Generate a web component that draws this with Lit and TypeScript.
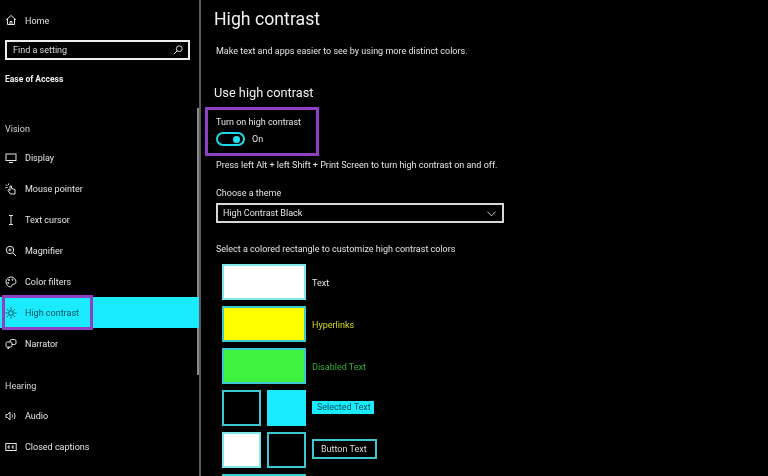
import { LitElement, html, css, svg } from "lit";
import { customElement } from "lit/decorators.js";

const ic = (p: unknown) => html`<svg class="ic" viewBox="0 0 12 12" fill="none" stroke="currentColor" stroke-width="1">${p}</svg>`;
const icons: Record<string, unknown> = {
  home: ic(svg`<path d="M1 6 6 1.500 11 6M2.500 5v5.500h7V5M5 10.500V7.500h2v3"/>`),
  display: ic(svg`<rect x="1" y="2" width="10" height="6.500"/><path d="M4 10.500h4"/>`),
  mouse: ic(svg`<path d="M5 3v4.500L3.500 6.500 3 7.500 5.500 11h4.500V6.500L6.500 5.500V3zM1 1.500l1.500 1.500M.5 4.500h2M3.500 .5v1.500"/>`),
  cursor: ic(svg`<path d="M4 1.500h4M4 10.500h4M6 1.500v9"/>`),
  magnifier: ic(svg`<circle cx="5" cy="5" r="3.700"/><path d="M7.700 7.700 11 11M3.500 5h3M5 3.500v3"/>`),
  filters: ic(svg`<path d="M6 1a5 5 0 0 0-5 5c0 2.500 2 5 4.500 5 1.500 0 1-1.500 1.500-2.200.6-.8 4-.3 4-2.800a5 5 0 0 0-5-5z"/><circle cx="4" cy="4" r=".6"/><circle cx="7.500" cy="3.700" r=".6"/><circle cx="3.200" cy="7" r=".6"/>`),
  contrast: ic(svg`<circle cx="6" cy="6" r="2.300"/><path d="M6 .5v2M6 9.500v2M.5 6h2M9.500 6h2M2 2l1.500 1.500M8.500 8.500 10 10M10 2 8.500 3.500M3.500 8.500 2 10"/>`),
  narrator: ic(svg`<rect x="1" y="4" width="6" height="5" rx="1.500"/><path d="M5 4V3a1.500 1.500 0 0 1 1.500-1.500h3A1.500 1.500 0 0 1 11 3v2a1.500 1.500 0 0 1-1.500 1.500H7M3 9v2l2-2"/>`),
  audio: ic(svg`<path d="M1 4.500v3h1.500L5 10V2L2.500 4.500zM7 4.500c.7 1 .7 2 0 3M9 3c1.300 2 1.300 4 0 6"/>`),
  captions: ic(svg`<rect x=".8" y="2.500" width="10.400" height="7"/><path d="M5 5H3.200v2H5M9 5H7.200v2H9"/>`),
};

const nav = [
  ["Display", "display"],
  ["Mouse pointer", "mouse"],
  ["Text cursor", "cursor"],
  ["Magnifier", "magnifier"],
  ["Color filters", "filters"],
  ["High contrast", "contrast"],
  ["Narrator", "narrator"],
];

@customElement("app-root")
export class AppRoot extends LitElement {
  static styles = css`
    :host { display: block; width: 768px; height: 476px; overflow: hidden; background: #000; color: #e4e4e4; font-family: Roboto, "Noto Sans", sans-serif; font-size: 9px; }
    * { box-sizing: border-box; }
    .page { display: flex; height: 476px; overflow: hidden; filter: blur(0.4px); }
    .side { width: 201px; flex: none; position: relative; padding-top: 5px; border-right: 2px solid #5a5a5a; }
    .thumb { position: absolute; right: 0; top: 108px; height: 267px; width: 2px; background: #8a8a8a; }
    .row { height: 31px; display: flex; align-items: center; gap: 8px; padding-left: 5px; }
    .row span { padding-top: 1px; }
    .ic { width: 12px; height: 12px; flex: none; }
    .home { height: 30px; }
    .search { margin: 5px 0 0 5px; width: 185px; height: 20px; border: 2px solid #eee; display: flex; align-items: center; justify-content: space-between; padding: 0 5px 0 6px; color: #ddd; }
    .search svg { width: 10px; height: 10px; }
    .brand { margin: 14px 0 0 5px; font-weight: 700; font-size: 8.500px; line-height: 11px; color: #eee; }
    .cat { padding-left: 5px; color: #d8d8d8; }
    .vision { margin-top: 38px; height: 12px; line-height: 12px; margin-bottom: 7px; }
    .hearing { margin-top: 21px; height: 12px; line-height: 12px; margin-bottom: 8px; }
    .row.on { background: #1aebff; color: #03505c; position: relative; }
    .hl { position: absolute; border: 3px solid #8e3fc4; pointer-events: none; }
    .hl.a { left: 2px; top: -2px; width: 91px; height: 35px; }
    .main { flex: 1; padding: 8px 0 0 13px; min-width: 0; }
    h1 { margin: 0; font-weight: 400; font-size: 17.700px; line-height: 22px; color: #f0f0f0; }
    .lead { margin: 15px 0 0 2px; line-height: 12px; }
    h2 { margin: 27px 0 0 0; font-weight: 400; font-size: 12.800px; line-height: 18px; color: #f0f0f0; }
    .toggle-box { position: relative; margin: 8px 0 0 2px; height: 41px; padding-top: 6px; }
    .hl.b { left: -11px; top: -3px; width: 114px; height: 49px; }
    .tg-label { line-height: 12px; }
    .tg { display: flex; align-items: center; gap: 7px; margin-top: 4px; }
    .switch { width: 29px; height: 14px; border: 2px solid #20d8e8; border-radius: 7px; display: flex; align-items: center; justify-content: flex-end; padding-right: 3px; }
    .switch i { width: 7px; height: 7px; border-radius: 50%; background: #20e4f5; }
    .press { margin: 8px 0 0 2px; line-height: 12px; }
    .choose { margin: 16px 0 0 2px; line-height: 12px; }
    .select { margin: 4px 0 0 2px; width: 288px; height: 20px; border: 2px solid #d8d8d8; display: flex; align-items: center; justify-content: space-between; padding: 0 5px 0 5px; }
    .select svg { width: 11px; height: 11px; }
    .sel-note { margin: 20px 0 0 2px; line-height: 12px; }
    .grid { margin: 9px 0 0 8px; display: flex; flex-direction: column; gap: 6px; }
    .sw-row { display: flex; align-items: center; gap: 6px; height: 36px; }
    .sw-row > span { padding-top: 2px; }
    .wide { width: 84px; height: 36px; border: 2px solid #3cc8cf; }
    .pair { display: flex; gap: 6px; }
    .sq { width: 39px; height: 36px; border: 2px solid #3cc8cf; }
    .sel { background: #1aebff; color: #03505c; padding: 0 5px; height: 13px; line-height: 13px; width: 62px; white-space: nowrap; margin-bottom: 2px; }
    .btn { border: 2px solid #3cc8cf; height: 20px; line-height: 16px; padding: 0 7px; width: 65px; white-space: nowrap; color: #ddd; margin-bottom: 2px; }
    .c-white { background: #fff; border-color: #7fe6ea; }
    .c-yellow { background: #ffff00; }
    .c-green { background: #3ff23f; }
    .c-cyan { background: #1aebff; border-color: #1aebff; }
    .t-yellow { color: #d8d820; }
    .t-green { color: #35b035; }
  `;

  render() {
    const item = ([label, icon]: string[]) => html`<div class="row ${label === "High contrast" ? "on" : ""}">${icons[icon]}<span>${label}</span>${label === "High contrast" ? html`<div class="hl a"></div>` : ""}</div>`;
    return html`<div class="page">
      <aside class="side">
        <div class="thumb"></div>
        <div class="row home">${icons.home}<span>Home</span></div>
        <div class="search"><span>Find a setting</span><svg viewBox="0 0 12 12" fill="none" stroke="currentColor" stroke-width="1.200"><circle cx="7.500" cy="4.500" r="3.500"/><path d="M5 7 1 11"/></svg></div>
        <div class="brand">Ease of Access</div>
        <div class="cat vision">Vision</div>
        ${nav.map(item)}
        <div class="cat hearing">Hearing</div>
        ${item(["Audio", "audio"])}
        ${item(["Closed captions", "captions"])}
      </aside>
      <main class="main">
        <h1>High contrast</h1>
        <p class="lead">Make text and apps easier to see by using more distinct colors.</p>
        <h2>Use high contrast</h2>
        <div class="toggle-box">
          <div class="hl b"></div>
          <div class="tg-label">Turn on high contrast</div>
          <div class="tg"><div class="switch"><i></i></div><span>On</span></div>
        </div>
        <div class="press">Press left Alt + left Shift + Print Screen to turn high contrast on and off.</div>
        <div class="choose">Choose a theme</div>
        <div class="select"><span>High Contrast Black</span><svg viewBox="0 0 12 12" fill="none" stroke="currentColor"><path d="M1.500 4 6 8.500 10.500 4"/></svg></div>
        <div class="sel-note">Select a colored rectangle to customize high contrast colors</div>
        <div class="grid">
          <div class="sw-row"><div class="wide c-white"></div><span>Text</span></div>
          <div class="sw-row"><div class="wide c-yellow"></div><span class="t-yellow">Hyperlinks</span></div>
          <div class="sw-row"><div class="wide c-green"></div><span class="t-green">Disabled Text</span></div>
          <div class="sw-row"><div class="pair"><div class="sq"></div><div class="sq c-cyan"></div></div><div class="sel">Selected Text</div></div>
          <div class="sw-row"><div class="pair"><div class="sq c-white"></div><div class="sq"></div></div><div class="btn">Button Text</div></div>
          <div class="sw-row"><div class="wide"></div></div>
        </div>
      </main>
    </div>`;
  }
}
